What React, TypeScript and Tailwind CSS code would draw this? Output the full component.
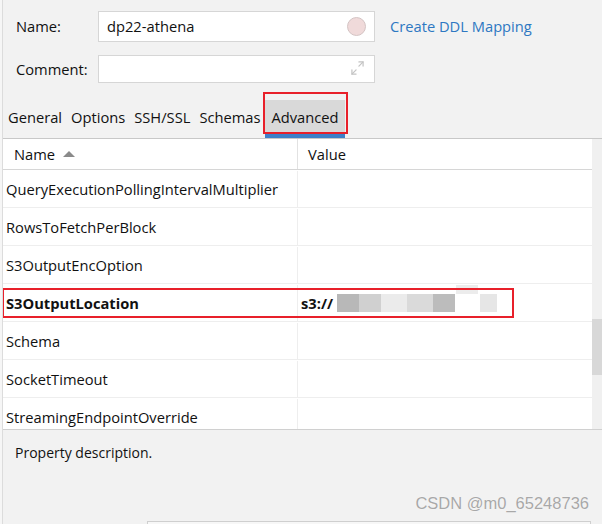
import { ArrowUpRight, ArrowDownLeft } from "lucide-react";

const rows = [
  "QueryExecutionPollingIntervalMultiplier",
  "RowsToFetchPerBlock",
  "S3OutputEncOption",
  "S3OutputLocation",
  "Schema",
  "SocketTimeout",
  "StreamingEndpointOverride",
];

const tabs = ["General", "Options", "SSH/SSL", "Schemas", "Advanced"];

const blurBlocks = [
  "bg-[#b8b8b8] w-[22px]",
  "bg-[#d0d0d0] w-[22px]",
  "bg-[#ebebeb] w-[26px]",
  "bg-[#dadada] w-[26px]",
  "bg-[#bcbcbc] w-[22px]",
  "bg-white w-[25px]",
  "bg-[#e6e6e6] w-[17px]",
];

export default function App() {
  return (
    <div
      className="relative flex h-[524px] w-[602px] overflow-hidden bg-[#f2f2f2] text-[14.7px] text-[#111]"
      style={{ fontFamily: '"Open Sans", "Noto Sans", sans-serif' }}
    >
      <div className="w-[3px] shrink-0 border-r border-[#dcdcdc] bg-[#f6f6f6]" />

      <div className="flex min-w-0 flex-1 flex-col">
        {/* form */}
        <div className="flex flex-col gap-[13px] pt-[11px]">
          <div className="flex items-center">
            <span className="w-[95px] pl-[13px]">Name:</span>
            <div className="flex h-[31px] w-[277px] items-center justify-between border border-[#d6d6d6] bg-white pl-2 pr-[8px]">
              <span>dp22-athena</span>
              <span className="h-[19px] w-[19px] rounded-full border border-[#d4c4c4] bg-[#f0dada]" />
            </div>
            <span className="ml-[15px] text-[#2e78c2]">Create DDL Mapping</span>
          </div>
          <div className="flex items-center">
            <span className="w-[95px] pl-[13px]">Comment:</span>
            <div className="relative flex h-[28px] w-[277px] items-center justify-end border border-[#d6d6d6] bg-white pr-[7px]">
              <ArrowUpRight className="absolute right-[8px] top-[3px] h-[10px] w-[10px] text-[#c4c4c4]" strokeWidth={3} />
              <ArrowDownLeft className="absolute right-[15px] top-[11px] h-[10px] w-[10px] text-[#c4c4c4]" strokeWidth={3} />
            </div>
          </div>
        </div>

        {/* tabs */}
        <div className="mt-[17px] flex h-[39px] items-stretch gap-[1px] border-b border-[#c8c8c8] pl-[1px]">
          {tabs.map((t) => (
            <div
              key={t}
              className={
                t === "Advanced"
                  ? "relative flex h-[34px] items-center border-b-[4px] border-[#3d80c9] bg-[#d9d9d9] px-[6px] box-content"
                  : "flex h-[38px] items-center px-[4px] pb-[3px]"
              }
            >
              {t}
              {t === "Advanced" && (
                <span className="pointer-events-none absolute -left-[2px] -right-[3px] -top-[8px] bottom-0 border-2 border-[#e8202a]" />
              )}
            </div>
          ))}
        </div>

        {/* table */}
        <div className="flex h-[290px] shrink-0">
          <div className="relative flex-1 overflow-hidden bg-white">
            <div className="flex h-[31px] border-b border-[#d6d6d6]">
              <div className="flex w-[295px] items-center border-r border-[#e2e2e2] pl-[11px]">
                Name
                <span className="ml-[8px] h-0 w-0 border-x-[6px] border-b-[6px] border-x-transparent border-b-[#8a8a8a]" />
              </div>
              <div className="flex items-center pl-[10px]">Value</div>
            </div>
            {rows.map((r) => (
              <div key={r} className="flex h-[38px] shrink-0 border-b border-[#eeeeee] pt-[1px]">
                <div
                  className={
                    "flex w-[295px] items-center border-r border-[#eeeeee] pl-[3px] " +
                    (r === "S3OutputLocation" ? "font-bold" : "")
                  }
                >
                  {r}
                </div>
                <div className="flex items-center pl-[3px]">
                  {r === "S3OutputLocation" && (
                    <>
                      <span className="font-bold">s3://</span>
                      <span className="relative ml-[4px] flex h-[18px]">
                        {blurBlocks.map((b, i) => (
                          <span key={i} className={"h-full " + b} />
                        ))}
                        <span className="absolute left-[119px] top-[-9px] h-[9px] w-[22px] bg-[#ececec]" />
                      </span>
                    </>
                  )}
                </div>
              </div>
            ))}
            <span className="pointer-events-none absolute left-[-1px] top-[149px] h-[30px] w-[512px] border-2 border-[#e8202a]" />
          </div>
          <div className="relative w-[10px] shrink-0 bg-[#f0f0f0]">
            <div className="absolute left-0 top-[180px] h-[56px] w-full bg-[#d8d8d8]" />
          </div>
        </div>

        {/* description */}
        <div className="flex flex-1 flex-col border-t border-[#d0d0d0]">
          <div className="pl-3 pt-[12px] text-[14px]">Property description.</div>
          <div className="mt-auto ml-[144px] mr-[11px] h-[3px] border-x border-t border-[#cfcfcf] bg-[#f7f7f7]" />
        </div>
      </div>

      <span
        className="absolute bottom-[8px] right-[13px] text-[16.5px] text-[#a8a8a8]"
        style={{ fontFamily: '"Liberation Sans", Arial, sans-serif', textShadow: "0 0 1px #fff" }}
      >
        CSDN @m0_65248736
      </span>
    </div>
  );
}
